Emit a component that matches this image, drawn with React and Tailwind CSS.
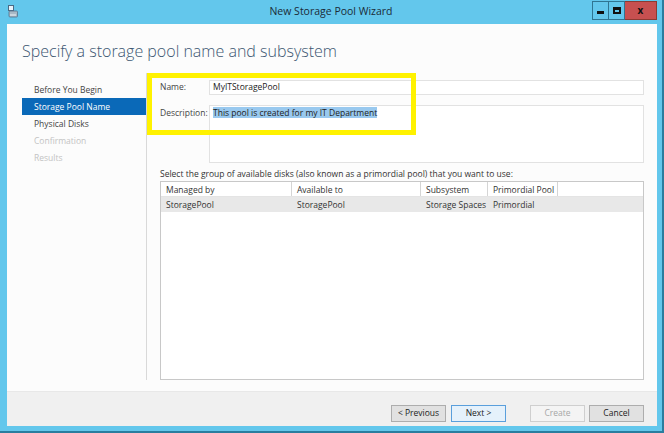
import React from "react";

const navItems = [
  { label: "Before You Begin", state: "done" },
  { label: "Storage Pool Name", state: "active" },
  { label: "Physical Disks", state: "done" },
  { label: "Confirmation", state: "off" },
  { label: "Results", state: "off" },
];

const columns = [
  { title: "Managed by", w: "w-[131px]" },
  { title: "Available to", w: "w-[129px]" },
  { title: "Subsystem", w: "w-[67px]" },
  { title: "Primordial Pool", w: "w-[70px]" },
];

const rows = [["StoragePool", "StoragePool", "Storage Spaces", "Primordial"]];

function WinButton({ children, variant }) {
  const styles = {
    normal: "border-[#adadad] bg-[#e1e1e1] text-[#222]",
    focus: "border-[#5a9fdc] bg-[#e5f1fb] text-[#222]",
    disabled: "border-[#cfcfcf] bg-[#f4f4f4] text-[#a6a6a6]",
  };
  return (
    <button className={`h-[17px] w-[55px] border text-[8.5px] leading-none ${styles[variant]}`}>
      {children}
    </button>
  );
}

export default function App() {
  return (
    <div
      className="relative flex h-[433px] w-[664px] flex-col border-r-2 border-b-2 border-[#2a7d9e] bg-[#63c7ec] text-[#333]"
      style={{ fontFamily: '"Open Sans", "Noto Sans", sans-serif' }}
    >
      {/* Title bar */}
      <div className="relative flex h-[24px] shrink-0 items-center">
        <svg className="absolute left-[8px] top-[5px]" width="10" height="13" viewBox="0 0 10 13">
          <rect x="0.5" y="0.5" width="5" height="5" fill="#e8f2fa" stroke="#4a6a85" />
          <rect x="1" y="6" width="8.5" height="6" rx="1" fill="#a9b9c6" stroke="#56728a" strokeWidth="0.8" />
          <rect x="2" y="9.5" width="6" height="1" fill="#eef3f7" />
        </svg>
        <div className="flex-1 text-center text-[10.5px] text-[#1b2b38]">New Storage Pool Wizard</div>
        <div className="absolute right-[5px] top-[1px] flex h-[19px]">
          <div className="flex w-[17px] items-center justify-center border border-[#2f7592] bg-[#63c7ec]">
            <div className="mt-[4px] h-[3px] w-[7px] bg-[#111]" />
          </div>
          <div className="flex w-[16px] items-center justify-center border-y border-r border-[#2f7592] bg-[#63c7ec]">
            <div className="h-[7px] w-[8px] border-[2px] border-t-[3px] border-[#111]" />
          </div>
          <div className="flex w-[32px] items-center justify-center border-y border-r border-[#8a3b33] bg-[#c75050] text-[10px] font-bold text-[#111]">
            x
          </div>
        </div>
      </div>

      {/* Client area */}
      <div className="ml-[7px] mr-[5px] mb-[5px] flex flex-1 flex-col bg-[#fcfcfc]">
        <div className="flex flex-1 flex-col border-b border-[#e8e8e8]">
          <h1 className="pl-[15px] pt-[15px] text-[16px] font-light leading-[24px] text-[#3b5671]">
            Specify a storage pool name and subsystem
          </h1>

          <div className="mt-[12px] flex flex-1 pb-[11px]">
            {/* Nav */}
            <div className="ml-[15px] flex w-[124px] flex-col pt-[6px]">
              {navItems.map((n) => (
                <div
                  key={n.label}
                  className={`h-[17px] pl-[12px] text-[8.5px] leading-[17px] ${
                    n.state === "active"
                      ? "bg-[#0a69b8] text-white"
                      : n.state === "off"
                      ? "text-[#c3c3c3]"
                      : "text-[#444]"
                  }`}
                >
                  {n.label}
                </div>
              ))}
            </div>

            {/* Main panel */}
            <div className="-mt-[2px] flex flex-1 flex-col border-l border-[#d9d9d9] pl-[13px] pr-[13px] pt-[7px] text-[8.5px]">
              <div className="flex items-center">
                <div className="w-[49px] text-[#444]">Name:</div>
                <div className="flex h-[15px] flex-1 items-center border border-[#e2e2e2] bg-white pl-[3px] text-[#222]">
                  MyITStoragePool
                </div>
              </div>
              <div className="mt-[10px] flex">
                <div className="w-[49px] pt-[2px] text-[#444]">Description:</div>
                <div className="h-[58px] flex-1 border border-[#e2e2e2] bg-white pl-[3px] pt-[1px]">
                  <span className="bg-[#99c9ef] text-[#222]">This pool is created for my IT Department</span>
                </div>
              </div>

              <div className="mt-[5px] text-[#333]">
                Select the group of available disks (also known as a primordial pool) that you want to use:
              </div>

              <div className="flex-1 border border-[#c8c8c8] bg-white">
                <div className="flex h-[15px] border-b border-[#e4e4e4]">
                  {columns.map((c) => (
                    <div key={c.title} className={`${c.w} border-r border-[#d5d5d5] pl-[5px] leading-[15px] text-[#333]`}>
                      {c.title}
                    </div>
                  ))}
                </div>
                {rows.map((r, i) => (
                  <div key={i} className="flex h-[15px] bg-[#e8e8e8]">
                    {r.map((v, j) => (
                      <div key={j} className={`${columns[j].w} pl-[5px] leading-[15px] text-[#333]`}>
                        {v}
                      </div>
                    ))}
                  </div>
                ))}
              </div>
            </div>
          </div>
        </div>

        {/* Button bar */}
        <div className="flex h-[34px] shrink-0 items-start justify-end bg-[#f0f0f0] pr-[13px] pt-[13px]">
          <WinButton variant="normal">&lt; Previous</WinButton>
          <div className="w-[5px]" />
          <WinButton variant="focus">Next &gt;</WinButton>
          <div className="w-[24px]" />
          <WinButton variant="disabled">Create</WinButton>
          <div className="w-[4px]" />
          <WinButton variant="normal">Cancel</WinButton>
        </div>
      </div>

      {/* Yellow annotation box */}
      <div className="pointer-events-none absolute left-[147px] top-[73px] h-[62px] w-[269px] border-[5px] border-[#fff200]" />
    </div>
  );
}
